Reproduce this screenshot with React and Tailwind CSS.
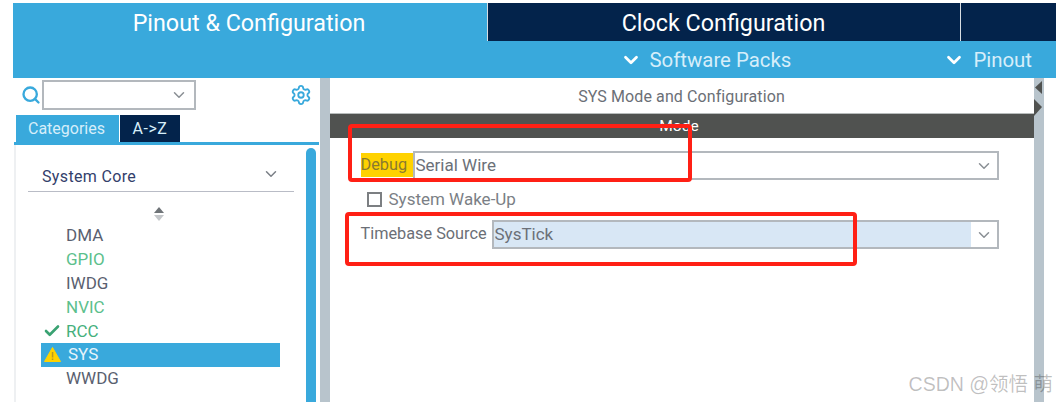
import { ChevronDown, Check, Search, Settings } from 'lucide-react'

const FONT = { fontFamily: 'Roboto, "Liberation Sans", sans-serif' }

const PERIPHERALS = [
  { name: 'DMA', color: 'text-[#5a5f70]' },
  { name: 'GPIO', color: 'text-[#5cc08c]' },
  { name: 'IWDG', color: 'text-[#5a5f70]' },
  { name: 'NVIC', color: 'text-[#5cc08c]' },
  { name: 'RCC', color: 'text-[#45b07c]', icon: 'check' },
  { name: 'SYS', color: 'text-[#e8f4fb]', icon: 'warn', active: true },
  { name: 'WWDG', color: 'text-[#5a5f70]' },
]

function Warning() {
  return (
    <svg width="17" height="15" viewBox="0 0 17 15" className="shrink-0">
      <path d="M8.5 0.5 L16.5 14.5 L0.5 14.5 Z" fill="#ffd200" stroke="#ffd200" strokeLinejoin="round" />
      <rect x="7.8" y="5" width="1.5" height="5.5" fill="#b79a20" />
      <rect x="7.8" y="11.5" width="1.5" height="1.5" fill="#b79a20" />
    </svg>
  )
}

function PeripheralRow({ item }) {
  return (
    <div className={`flex items-center h-[23.8px] w-[239px] ${item.active ? 'bg-[#39a9dc]' : ''}`}>
      <div className="w-[25px] pl-[3px] flex items-center shrink-0">
        {item.icon === 'check' && <Check size={18} strokeWidth={3.5} className="text-[#3aa272] -ml-[1px]" />}
        {item.icon === 'warn' && <Warning />}
      </div>
      <span className={`text-[17px] leading-none ${item.active ? 'ml-[2px]' : ''} ${item.color}`}>{item.name}</span>
    </div>
  )
}

function SelectBox({ value, label, labelClass, fill }) {
  return (
    <div className="flex items-stretch h-[29px]">
      <span className={`flex items-center text-[16.3px] text-[#6b6f76] whitespace-nowrap ${labelClass}`}>{label}</span>
      <div className="flex-1 flex border-2 border-[#b3b8bd] bg-white">
        <div className={`flex-1 flex items-center pl-[1px] text-[17px] text-[#6b7078] ${fill}`}>{value}</div>
        <div className="w-[26px] flex items-center justify-center">
          <ChevronDown size={18} className="text-[#8a8f94]" />
        </div>
      </div>
    </div>
  )
}

export default function App() {
  return (
    <div style={FONT} className="relative w-[1056px] h-[402px] overflow-hidden bg-white pt-[3px] pl-[12.5px]">
      {/* top tabs */}
      <div className="flex h-[38px] text-[23.3px]">
        <div className="w-[474px] bg-[#39a9dc] text-white flex items-center justify-center pt-[3px] pr-[1px]">Pinout &amp; Configuration</div>
        <div className="w-[473px] bg-[#03234b] text-white flex items-center justify-center pt-[3px] border-l border-[#d8dde2] font-[450]">Clock Configuration</div>
        <div className="flex-1 bg-[#03234b] border-l border-[#d8dde2]" />
      </div>
      <div className="flex h-[37px] pt-[2px] items-center justify-end bg-[#39a9dc] text-[#d6eefa] text-[20.4px]">
        <div className="flex items-center gap-[7px] mr-[152px]">
          <ChevronDown size={22} strokeWidth={3} className="text-white" />
          <span>Software Packs</span>
        </div>
        <div className="flex items-center gap-[8px] mr-[24px]">
          <ChevronDown size={22} strokeWidth={3} className="text-white" />
          <span>Pinout</span>
        </div>
      </div>

      <div className="flex h-[324px]">
        {/* left panel */}
        <div className="w-[307px] shrink-0 flex flex-col">
          <div className="flex items-center h-[33px] pl-[8px] pr-[8px]">
            <Search size={20} strokeWidth={2.8} className="text-[#39a9dc] shrink-0" />
            <div className="ml-[1px] w-[154px] h-[30px] border-2 border-[#b3b8bd] flex items-center justify-end pr-[6px]">
              <ChevronDown size={18} className="text-[#8a8f94]" />
            </div>
            <Settings size={22} strokeWidth={2} className="ml-auto text-[#39a9dc]" />
          </div>
          <div className="flex h-[27px] pl-[3.5px] mt-[4px] text-[16px]">
            <div className="w-[103px] bg-[#39a9dc] text-[#d6eefa] flex items-center justify-center pr-[2px]">Categories</div>
            <div className="ml-px w-[60px] bg-[#03234b] text-[#d6eefa] flex items-center justify-center tracking-[0.5px]">A-&gt;Z</div>
          </div>
          <div className="h-[3px] ml-[1px] mr-[1px] bg-[#39a9dc]" />
          <div className="flex-1 flex ml-[1px] border-l-2 border-[#eef0f2]">
            <div className="flex-1 flex flex-col pl-[12px] pr-[12px]">
              <div className="flex items-end justify-between h-[42px] mt-[5px] border-b border-[#b9bcc6] pl-[14.5px] pr-[14px] pb-[2px]">
                <span className="text-[16px] text-[#33406b] tracking-[0.35px]">System Core</span>
                <ChevronDown size={18} className="text-[#7a7f86] mb-[6px]" />
              </div>
              <div className="flex justify-center h-[32px] pt-[15px] pr-[4px]">
                <svg width="10" height="14" viewBox="0 0 10 14">
                  <path d="M5 0 L10 6 L0 6 Z" fill="#6f7478" />
                  <path d="M5 14 L10 8 L0 8 Z" fill="#c4c7ca" />
                </svg>
              </div>
              <div className="flex flex-col ml-[13.5px]">
                {PERIPHERALS.map((item) => (
                  <PeripheralRow key={item.name} item={item} />
                ))}
              </div>
            </div>
            <div className="w-[10px] mt-[3px] mr-[4px] bg-[#39a9dc] rounded-t-[5px]" />
          </div>
        </div>

        <div className="w-[10px] shrink-0 bg-[#b8c4cc]" />

        {/* right panel */}
        <div className="w-[704px] shrink-0 flex flex-col">
          <div className="h-[35px] pt-[3px] flex items-center justify-center text-[16px] text-[#6b6f76] tracking-[0.1px]">SYS Mode and Configuration</div>
          <div className="h-[25px] pt-[2px] bg-[#505250] border-t border-[#b8bcbc] flex items-center justify-center pr-[5px] text-[15.5px] text-white">Mode</div>
          <div className="pl-[31px] pr-[35px] pt-[13px]">
            <SelectBox label="Debug" labelClass="w-[52px] bg-[#ffd200] h-[24px] self-start mt-[2px] text-[#8a7a30]" value="Serial Wire" />
            <div className="flex items-center h-[19px] mt-[10px] ml-[6px]">
              <div className="w-[15px] h-[15px] border-2 border-[#7c7f82]" />
              <span className="ml-[7px] text-[17px] text-[#7b7f86]">System Wake-Up</span>
            </div>
            <div className="mt-[11px]">
              <SelectBox label="Timebase Source" labelClass="w-[131px]" value="SysTick" fill="bg-[#d8e7f5]" />
            </div>
          </div>
        </div>

        <div className="relative w-[10px] shrink-0 bg-[#b8c4cc]">
          <svg width="9" height="36" viewBox="0 0 9 36" className="absolute left-0 top-[2px]">
            <path d="M8 1 L1 7.500 L8 14 Z" fill="#505250" />
            <path d="M0 19 L8 27 L0 36 Z" fill="#505250" />
          </svg>
        </div>
      </div>

      {/* red annotation boxes */}
      <div className="absolute left-[348px] top-[124px] w-[344px] h-[58px] border-4 border-[#ff2015] rounded-[4px]" />
      <div className="absolute left-[345px] top-[212px] w-[512px] h-[54px] border-4 border-[#ff2015] rounded-[4px]" />

      {/* watermark */}
      <div
        className="absolute right-[3px] top-[374px] text-[19.5px] leading-[20px] text-black/25 whitespace-nowrap"
        style={{ fontFamily: '"Liberation Sans", "Noto Sans CJK SC", sans-serif' }}
      >
        CSDN @领悟 萌
      </div>
    </div>
  )
}
